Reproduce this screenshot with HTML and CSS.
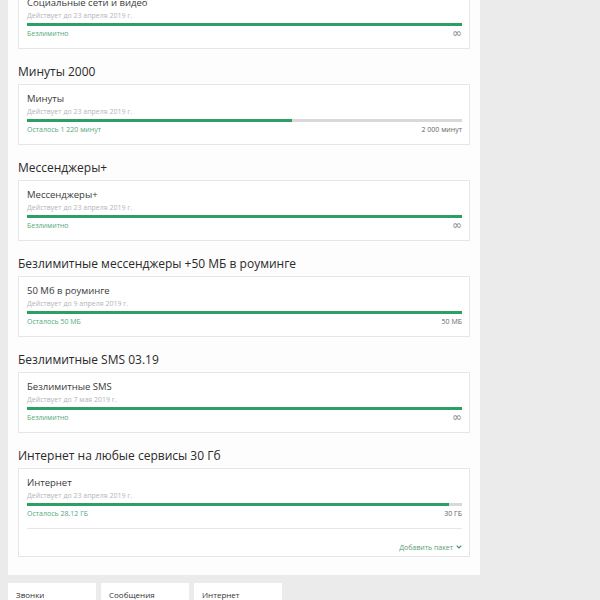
FILE: index.html
```html
<!DOCTYPE html>
<html lang="ru">
<head>
<meta charset="utf-8">
<link rel="stylesheet" href="styles.css">
</head>
<body>
<div class="page">
  <div class="panel">
    <div class="card">
      <div class="title">Социальные сети и видео</div>
      <div class="date">Действует до 23 апреля 2019 г.</div>
      <div class="bar"><div class="fill" style="width:100%"></div></div>
      <div class="row"><span class="left">Безлимитно</span><span class="inf">∞</span></div>
    </div>

    <h2 class="heading">Минуты 2000</h2>
    <div class="card">
      <div class="title">Минуты</div>
      <div class="date">Действует до 23 апреля 2019 г.</div>
      <div class="bar"><div class="fill" style="width:61%"></div></div>
      <div class="row"><span class="left">Осталось 1 220 минут</span><span class="right">2 000 минут</span></div>
    </div>

    <h2 class="heading">Мессенджеры+</h2>
    <div class="card">
      <div class="title">Мессенджеры+</div>
      <div class="date">Действует до 23 апреля 2019 г.</div>
      <div class="bar"><div class="fill" style="width:100%"></div></div>
      <div class="row"><span class="left">Безлимитно</span><span class="inf">∞</span></div>
    </div>

    <h2 class="heading">Безлимитные мессенджеры +50 МБ в роуминге</h2>
    <div class="card">
      <div class="title">50 Мб в роуминге</div>
      <div class="date">Действует до 9 апреля 2019 г.</div>
      <div class="bar"><div class="fill" style="width:100%"></div></div>
      <div class="row"><span class="left">Осталось 50 МБ</span><span class="right">50 МБ</span></div>
    </div>

    <h2 class="heading">Безлимитные SMS 03.19</h2>
    <div class="card">
      <div class="title">Безлимитные SMS</div>
      <div class="date">Действует до 7 мая 2019 г.</div>
      <div class="bar"><div class="fill" style="width:100%"></div></div>
      <div class="row"><span class="left">Безлимитно</span><span class="inf">∞</span></div>
    </div>

    <h2 class="heading">Интернет на любые сервисы 30 Гб</h2>
    <div class="card">
      <div class="title">Интернет</div>
      <div class="date">Действует до 23 апреля 2019 г.</div>
      <div class="bar"><div class="fill" style="width:97%"></div></div>
      <div class="row"><span class="left">Осталось 28.12 ГБ</span><span class="right">30 ГБ</span></div>
      <div class="footer">
        <span class="add">Добавить пакет</span>
        <svg class="chev" width="6" height="4" viewBox="0 0 6 4"><path d="M0.7 0.7 L3 3 L5.3 0.7" fill="none" stroke="#4a8a68" stroke-width="1.1"/></svg>
      </div>
    </div>
  </div>

  <div class="tabs">
    <div class="tab">Звонки</div>
    <div class="tab">Сообщения</div>
    <div class="tab">Интернет</div>
  </div>
</div>
</body>
</html>
```
FILE: styles.css
```css
html, body {
  margin: 0;
  padding: 0;
  background: #ebebeb;
  font-family: "Open Sans", "Liberation Sans", sans-serif;
  color: #333;
}
.page {
  margin-top: -12px;
  padding-left: 8px;
}
.panel {
  width: 452px;
  background: #fdfdfd;
  padding: 0 10px 18px 10px;
}
.heading {
  margin: 15px 0 4px 0;
  font-size: 12px;
  line-height: 16px;
  font-weight: 400;
  color: #2a2a2a;
}
.card {
  border: 1px solid #e6e6e6;
  background: #fff;
  padding: 8px 7px 10px 8px;
}
.title {
  font-size: 9.5px;
  line-height: 12px;
  color: #3a3a3a;
}
.date {
  margin-top: 2px;
  font-size: 7px;
  line-height: 9px;
  color: #b4b4b4;
}
.bar {
  margin-top: 3px;
  height: 3px;
  background: #d9d9d9;
}
.fill {
  height: 3px;
  background: #2f9e63;
}
.row {
  margin-top: 3px;
  display: flex;
  justify-content: space-between;
  align-items: center;
  height: 9px;
  font-size: 7px;
  line-height: 9px;
}
.left {
  color: #54a87a;
}
.right {
  color: #666;
}
.inf {
  color: #8a8a8a;
  font-size: 12px;
  line-height: 9px;
  font-family: "DejaVu Sans", sans-serif;
}
.footer {
  margin-top: 10px;
  border-top: 1px solid #e6e6e6;
  height: 18px;
  padding-top: 9px;
  display: flex;
  justify-content: flex-end;
  align-items: center;
  gap: 3px;
  margin-bottom: -10px;
}
.add {
  font-size: 7px;
  color: #5a9a78;
}
.chev {
  display: block;
}
.tabs {
  display: flex;
  gap: 5px;
  margin-top: 8px;
}
.tab {
  width: 80px;
  height: 30px;
  background: #fff;
  padding: 6px 0 0 8px;
  font-size: 8px;
  color: #333;
}
```
